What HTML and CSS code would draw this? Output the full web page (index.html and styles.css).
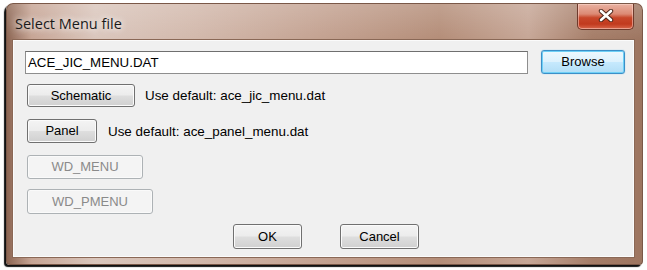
FILE: index.html
```html
<!DOCTYPE html>
<html>
<head>
<meta charset="utf-8">
<link rel="stylesheet" href="styles.css">
</head>
<body>
<div class="window">
  <div class="titlebar">
    <span class="title">Select Menu file</span>
    <div class="close">
      <svg width="16" height="13" viewBox="0 0 16 13">
        <path d="M3 2 L13 11 M13 2 L3 11" stroke="#4a2418" stroke-width="4.4" stroke-linecap="round"/>
        <path d="M3 2 L13 11 M13 2 L3 11" stroke="#ffffff" stroke-width="2.6" stroke-linecap="round"/>
      </svg>
    </div>
  </div>
  <div class="client">
    <div class="row first">
      <div class="field">ACE_JIC_MENU.DAT</div>
      <button class="btn default browse">Browse</button>
    </div>
    <div class="row r2 indent">
      <button class="btn schematic">Schematic</button>
      <span class="label">Use default: ace_jic_menu.dat</span>
    </div>
    <div class="row r3 indent">
      <button class="btn panel">Panel</button>
      <span class="label">Use default: ace_panel_menu.dat</span>
    </div>
    <div class="row r4 indent">
      <button class="btn disabled wdmenu">WD_MENU</button>
    </div>
    <div class="row r5 indent">
      <button class="btn disabled wdpmenu">WD_PMENU</button>
    </div>
    <div class="row actions">
      <button class="btn ok">OK</button>
      <button class="btn cancel">Cancel</button>
    </div>
  </div>
</div>
</body>
</html>
```
FILE: styles.css
```css
html, body {
  margin: 0;
  padding: 0;
  background: #ffffff;
}
body {
  width: 647px;
  height: 270px;
  overflow: hidden;
}
.window {
  box-sizing: border-box;
  margin: 3px 0 0 6px;
  width: 637px;
  height: 262px;
  padding: 0 9px 8px 7px;
  border-radius: 7px 7px 4px 4px;
  display: flex;
  flex-direction: column;
  background:
    linear-gradient(180deg, rgba(255,255,255,0.18) 0px, rgba(255,255,255,0) 37px),
    linear-gradient(90deg, #8a6350 0%, #c6a494 4%, #dac6bc 14%, #d2b8ab 30%, #c3a190 50%, #b48d78 68%, #c6a696 82%, #a57d68 92%, #9d7560 100%);
  box-shadow: -2px 2px 1px #111, inset 0 0 0 1px #7a5848;
}
.titlebar {
  height: 37px;
  display: flex;
  justify-content: space-between;
  align-items: flex-start;
  flex: none;
}
.title {
  font-family: "Open Sans", "Noto Sans", sans-serif;
  font-size: 14.5px;
  color: #1a1a1a;
  padding: 11px 0 0 2px;
  text-shadow: 0 0 6px rgba(255,255,255,0.9), 0 0 10px rgba(255,255,255,0.7);
}
.close {
  box-sizing: border-box;
  width: 57px;
  height: 26px;
  margin-top: 1px;
  border: 1px solid #6e3a2c;
  border-top: none;
  border-radius: 0 0 5px 5px;
  background: linear-gradient(180deg, #e9b2a2 0%, #dc8a74 40%, #c8472a 55%, #c13a1e 80%, #d8664a 100%);
  box-shadow: inset 0 0 0 1px rgba(255,220,210,0.5);
  display: flex;
  align-items: center;
  justify-content: center;
}
.close svg {
  display: block;
  margin-top: -2px;
}
.client {
  box-sizing: border-box;
  flex: 1;
  background: #f0f0f0;
  border: 1px solid #fbfbfb;
  box-shadow: 0 0 0 1px #8a6856;
  padding: 9px 8px 0 11px;
  display: flex;
  flex-direction: column;
  font-family: "Liberation Sans", Arial, sans-serif;
  font-size: 13px;
}
.row {
  display: flex;
  align-items: center;
}
.indent {
  padding-left: 2px;
}
.first {
  height: 24px;
}
.r2 { margin-top: 10px; }
.r3 { margin-top: 12px; }
.r4 { margin-top: 12px; }
.r5 { margin-top: 10px; }
.actions {
  margin-top: 10px;
  justify-content: center;
  gap: 38px;
  padding-left: 2px;
}
.field {
  box-sizing: border-box;
  width: 503px;
  height: 23px;
  margin-top: 1px;
  background: #ffffff;
  border: 1px solid #8e8e8e;
  border-top-color: #6f6f6f;
  padding: 3px 0 0 2px;
  font-size: 13.3px;
  color: #000;
  line-height: 16px;
}
.btn {
  box-sizing: border-box;
  height: 24px;
  padding: 0;
  font-family: "Liberation Sans", Arial, sans-serif;
  font-size: 13px;
  color: #000;
  border: 1px solid #707070;
  border-radius: 3px;
  background: linear-gradient(180deg, #f4f4f4 0%, #ececec 48%, #dedede 52%, #d0d0d0 100%);
  box-shadow: inset 0 0 0 1px #fbfbfb;
  text-align: center;
  line-height: 20px;
}
.default {
  border-color: #3c8fc8;
  background: linear-gradient(180deg, #eef8fe 0%, #def2fd 48%, #c6e9fd 52%, #b2def6 100%);
  box-shadow: inset 0 0 0 1px #6fd0f6, 0 0 1px #5bb8e8;
}
.disabled {
  border-color: #adb2b5;
  background: #f4f4f4;
  color: #8a8a8a;
  box-shadow: inset 0 0 0 1px #fafafa;
}
.browse { width: 84px; margin-left: 13px; }
.schematic { width: 108px; height: 23px; }
.panel { width: 70px; }
.wdmenu { width: 116px; }
.wdpmenu { width: 126px; height: 25px; }
.ok { width: 69px; height: 25px; }
.cancel { width: 79px; height: 25px; }
.label {
  margin-left: 10px;
  font-size: 13.4px;
  color: #000;
}
.r3 .label { margin-left: 11px; }
```
